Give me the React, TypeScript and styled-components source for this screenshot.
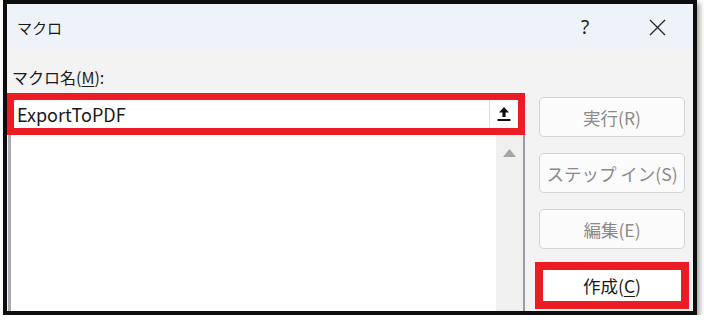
import React from 'react'
import styled, { createGlobalStyle } from 'styled-components'

const GlobalStyle = createGlobalStyle`
  html, body {
    margin: 0;
    padding: 0;
    background: #ffffff;
  }
  body {
    font-family: "Noto Sans CJK JP", "Noto Sans", sans-serif;
  }
`

const Frame = styled.div`
  margin-left: 3px;
  width: 694px;
  height: 315px;
  box-sizing: border-box;
  border: 4px solid #0d0d0d;
  box-shadow: 3px 3px 5px rgba(0, 0, 0, 0.35);
  background: #f3f3f3;
  display: flex;
  flex-direction: column;
  overflow: hidden;
`

const TitleBar = styled.div`
  height: 46px;
  flex: none;
  background: #eef3f9;
  display: flex;
  align-items: center;
  padding-left: 10px;
  font-size: 15px;
  color: #1a1a1a;
`

const Title = styled.span`
  flex: 1;
`

const TitleButton = styled.span`
  width: 72px;
  display: flex;
  justify-content: center;
  align-items: center;
  font-family: "Noto Sans", sans-serif;
  font-size: 19px;
  color: #222;
`

const Body = styled.div`
  flex: 1;
  display: grid;
  grid-template-columns: 518px 154px;
  column-gap: 10px;
  min-height: 0;
`

const LeftColumn = styled.div`
  display: flex;
  flex-direction: column;
  min-height: 0;
`

const Label = styled.div`
  height: 43px;
  box-sizing: border-box;
  padding: 15px 0 0 5px;
  font-size: 16px;
  color: #1a1a1a;
  line-height: 24px;
  u {
    text-decoration-thickness: 1px;
    text-underline-offset: 2px;
  }
`

const NameBox = styled.div`
  height: 42px;
  box-sizing: border-box;
  border: 7px solid #ec1c24;
  background: #ffffff;
  display: flex;
  align-items: center;
`

const NameText = styled.div`
  flex: 1;
  padding-left: 3px;
  font-size: 18px;
  color: #1a1a1a;
`

const CollapseButton = styled.div`
  width: 28px;
  height: 100%;
  border-left: 1px solid #e0e0e0;
  display: flex;
  align-items: center;
  justify-content: center;
`

const MacroList = styled.div`
  flex: 1;
  margin-left: 1px;
  border-left: 3px solid #a9adb3;
  border-right: 2px solid #9a9ea4;
  background: #ffffff;
  display: flex;
  justify-content: flex-end;
`

const ScrollTrack = styled.div`
  width: 27px;
  background: #f0f0f0;
  display: flex;
  justify-content: center;
  padding-top: 14px;
`

const RightColumn = styled.div`
  display: flex;
  flex-direction: column;
  align-items: center;
  padding-top: 47px;
`

const DialogButton = styled.div<{ $highlight?: boolean; $gap: number }>`
  box-sizing: border-box;
  margin-bottom: ${p => p.$gap}px;
  width: ${p => (p.$highlight ? 154 : 146)}px;
  height: ${p => (p.$highlight ? 47 : 40)}px;
  border: ${p => (p.$highlight ? '8px solid #ec1c24' : '1px solid #d3d3d3')};
  border-radius: ${p => (p.$highlight ? 0 : 5)}px;
  background: ${p => (p.$highlight ? '#ffffff' : '#fbfbfb')};
  color: ${p => (p.$highlight ? '#1a1a1a' : '#8a8a8a')};
  font-size: 17.5px;
  display: flex;
  align-items: center;
  justify-content: center;
  u {
    text-decoration-thickness: 1px;
    text-underline-offset: 3px;
  }
`

const App: React.FC = () => {
  return (
    <>
      <GlobalStyle />
      <Frame>
        <TitleBar>
          <Title>マクロ</Title>
          <TitleButton>?</TitleButton>
          <TitleButton>
            <svg width="17" height="17" viewBox="0 0 17 17">
              <path d="M1 1 L16 16 M16 1 L1 16" stroke="#2a2a2a" strokeWidth="1.4" fill="none" />
            </svg>
          </TitleButton>
        </TitleBar>
        <Body>
          <LeftColumn>
            <Label>
              マクロ名(<u>M</u>):
            </Label>
            <NameBox>
              <NameText>ExportToPDF</NameText>
              <CollapseButton>
                <svg width="16" height="16" viewBox="0 0 16 16">
                  <path d="M8 1 L13 6.5 L9.6 6.5 L9.6 11 L6.4 11 L6.4 6.5 L3 6.5 Z" fill="#111" />
                  <rect x="1.5" y="13" width="13" height="2" fill="#111" />
                </svg>
              </CollapseButton>
            </NameBox>
            <MacroList>
              <ScrollTrack>
                <svg width="13" height="8" viewBox="0 0 13 8">
                  <path d="M6.5 0 L13 8 L0 8 Z" fill="#a6a6a6" />
                </svg>
              </ScrollTrack>
            </MacroList>
          </LeftColumn>
          <RightColumn>
            <DialogButton $gap={16}>実行(R)</DialogButton>
            <DialogButton $gap={16}>ステップ イン(S)</DialogButton>
            <DialogButton $gap={13}>編集(E)</DialogButton>
            <DialogButton $gap={0} $highlight>
              作成(<u>C</u>)
            </DialogButton>
          </RightColumn>
        </Body>
      </Frame>
    </>
  )
}

export default App
